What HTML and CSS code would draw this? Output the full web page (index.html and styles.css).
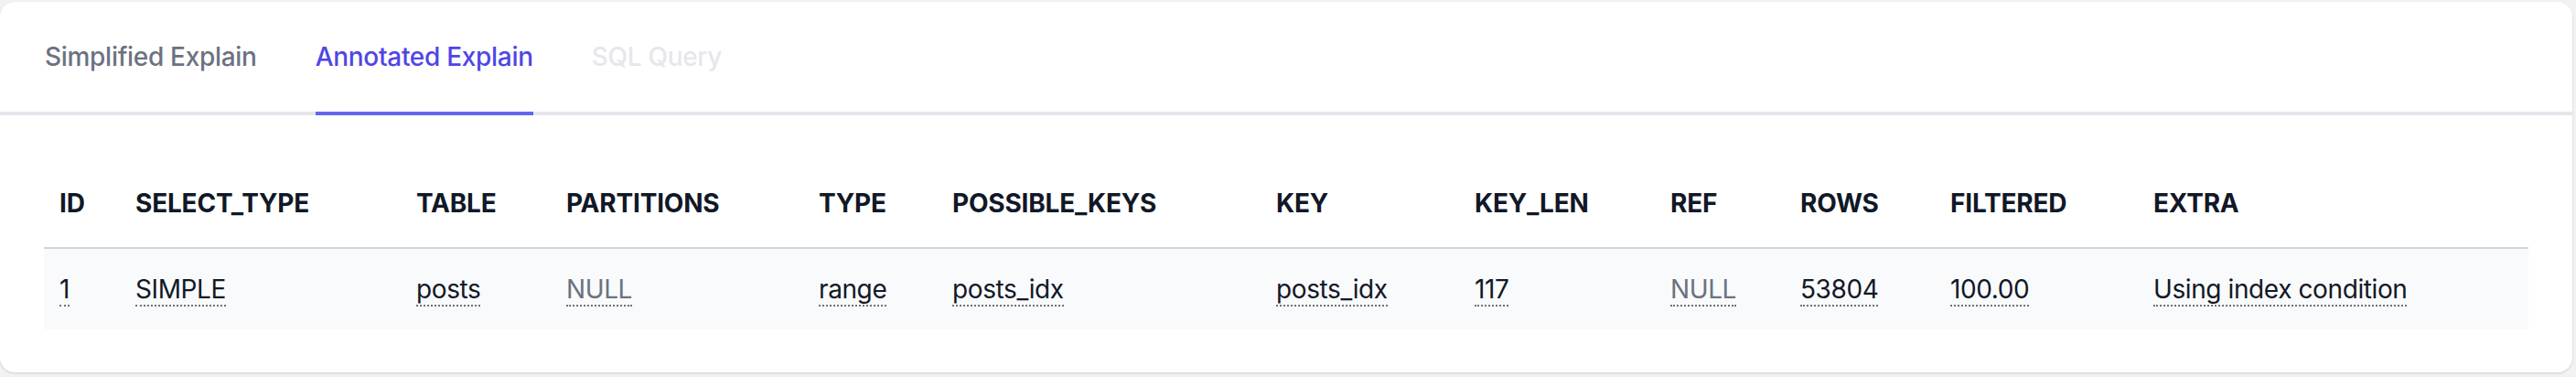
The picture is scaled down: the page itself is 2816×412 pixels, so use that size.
FILE: index.html
```html
<!DOCTYPE html>
<html lang="en">
<head>
<meta charset="utf-8">
<title>Explain</title>
<link rel="stylesheet" href="styles.css">
</head>
<body>
<div class="card">
  <nav class="tabs">
    <span class="tab">Simplified Explain</span>
    <span class="tab tab-active">Annotated Explain</span>
    <span class="tab tab-disabled">SQL Query</span>
  </nav>
  <div class="panel">
    <table class="explain">
      <colgroup>
        <col class="c-id"><col class="c-select"><col class="c-table"><col class="c-part">
        <col class="c-type"><col class="c-pkeys"><col class="c-key"><col class="c-keylen">
        <col class="c-ref"><col class="c-rows"><col class="c-filtered"><col class="c-extra">
      </colgroup>
      <thead>
        <tr>
          <th>ID</th><th>SELECT_TYPE</th><th>TABLE</th><th>PARTITIONS</th><th>TYPE</th><th>POSSIBLE_KEYS</th><th>KEY</th><th>KEY_LEN</th><th>REF</th><th>ROWS</th><th>FILTERED</th><th>EXTRA</th>
        </tr>
      </thead>
      <tbody>
        <tr>
          <td><span class="val">1</span></td>
          <td><span class="val">SIMPLE</span></td>
          <td><span class="val">posts</span></td>
          <td><span class="val null">NULL</span></td>
          <td><span class="val">range</span></td>
          <td><span class="val">posts_idx</span></td>
          <td><span class="val">posts_idx</span></td>
          <td><span class="val">117</span></td>
          <td><span class="val null">NULL</span></td>
          <td><span class="val">53804</span></td>
          <td><span class="val">100.00</span></td>
          <td><span class="val">Using index condition</span></td>
        </tr>
      </tbody>
    </table>
  </div>
</div>
</body>
</html>
```
FILE: styles.css
```css
html, body {
  margin: 0;
  padding: 0;
}
body {
  background: #f1f2f4;
  font-family: Inter, "Noto Sans", "Liberation Sans", sans-serif;
  color: #111827;
  padding: 2px 4px 5px 0;
  width: 2816px;
  box-sizing: border-box;
}
.card {
  background: #ffffff;
  border-radius: 16px;
  box-shadow: 0 1px 3px rgba(0, 0, 0, 0.10), 0 1px 2px rgba(0, 0, 0, 0.06);
  overflow: hidden;
}
.tabs {
  display: flex;
  gap: 64px;
  padding: 0 49px;
  border-bottom: 4px solid #e5e7eb;
}
.tab {
  font-size: 28px;
  line-height: 40px;
  font-weight: 500;
  letter-spacing: -0.3px;
  color: #6b7280;
  padding: 40px 0;
  border-bottom: 4px solid transparent;
  margin-bottom: -4px;
  white-space: nowrap;
}
.tab-active {
  color: #4f46e5;
  border-bottom-color: #6366f1;
}
.tab-disabled {
  color: #e5e7eb;
}
.panel {
  padding: 48px 48px 47px;
}
.explain {
  width: 100%;
  border-collapse: collapse;
  table-layout: fixed;
}
.c-id { width: 83px; }
.c-select { width: 307px; }
.c-table { width: 164px; }
.c-part { width: 276px; }
.c-type { width: 146px; }
.c-pkeys { width: 354px; }
.c-key { width: 217px; }
.c-keylen { width: 214px; }
.c-ref { width: 142px; }
.c-rows { width: 164px; }
.c-filtered { width: 222px; }
.c-extra { width: auto; }
.explain th {
  text-align: left;
  font-size: 28px;
  line-height: 40px;
  font-weight: 700;
  letter-spacing: -0.2px;
  color: #111827;
  padding: 28px 16px 28px 17px;
  white-space: nowrap;
}
.explain thead tr {
  border-bottom: 2px solid #d1d5db;
}
.explain tbody tr {
  background: #f9fafb;
}
.explain td {
  font-size: 28px;
  line-height: 40px;
  font-weight: 400;
  letter-spacing: -0.4px;
  color: #111827;
  padding: 24px 16px 24px 17px;
  white-space: nowrap;
}
.val {
  border-bottom: 2px dotted #6b7280;
}
.null {
  color: #6b7280;
}
```
